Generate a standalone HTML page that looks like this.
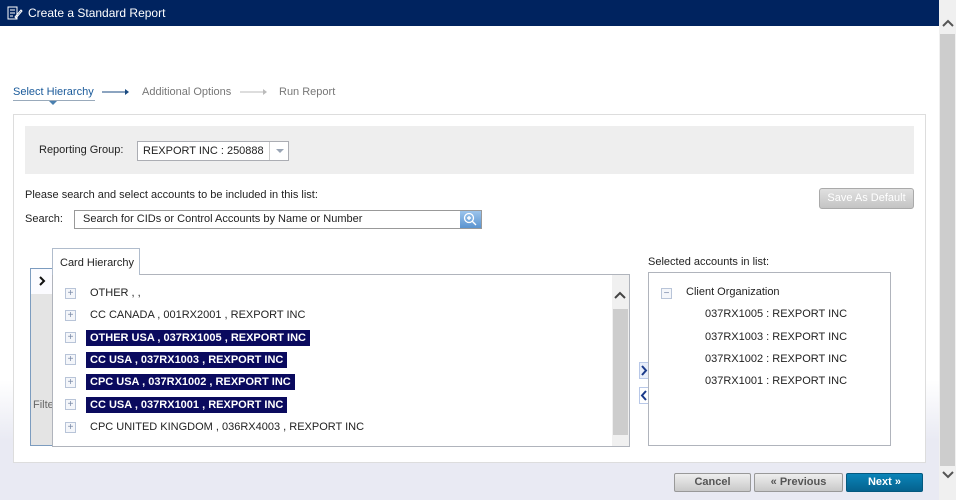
<!DOCTYPE html>
<html><head><style>
*{margin:0;padding:0;box-sizing:border-box}
body{width:956px;height:500px;overflow:hidden;position:relative;font-family:"Liberation Sans",Arial,sans-serif;font-size:11px;color:#222;background:linear-gradient(#fff 0,#fff 380px,#e9eaf3 440px,#e9eaf3 500px)}
.a{position:absolute;white-space:nowrap}
.hdr{left:0;top:0;width:939px;height:26px;background:#00235f;color:#fff;font-size:12px;line-height:26px;padding-left:28px}
.plus{position:absolute;left:65px;width:11px;height:11px;border:1px solid #b8c4d8;background:#f4f6fa;color:#7a8aa8;font-size:10px;line-height:9px;text-align:center}
.row{position:absolute;left:86px;height:16px;line-height:16px;font-size:11px;padding:0 4px;white-space:nowrap}
.sel{background:#0a0a5e;color:#fff;font-weight:bold}
.btn{position:absolute;top:473px;height:19px;border:1px solid #999;border-radius:2px;background:linear-gradient(#eee,#c9c9c9);font-weight:bold;color:#555;font-size:11px;line-height:17px;text-align:center}
</style></head><body>
<div class="a hdr">Create a Standard Report</div>
<svg class="a" style="left:7px;top:6px" width="16" height="14" viewBox="0 0 16 14"><rect x="1" y="1" width="9" height="12" fill="none" stroke="#fff"/><path d="M3 4h5M3 7h5M3 10h3M8 11l6-7 1 1-6 7z" stroke="#fff" fill="none"/></svg>
<!-- scrollbar -->
<div class="a" style="left:939px;top:0;width:17px;height:500px;background:#f0f0f0"></div>
<div class="a" style="left:940px;top:34px;width:15px;height:432px;background:#cdcdcd"></div>
<svg class="a" style="left:941px;top:470px" width="14" height="10"><path d="M2 2l5 5 5-5" stroke="#555" stroke-width="2" fill="none"/></svg>
<svg class="a" style="left:941px;top:18px" width="14" height="10"><path d="M2 8l5-5 5 5" stroke="#555" stroke-width="2" fill="none"/></svg>
<!-- steps -->
<div class="a" style="left:13px;top:86px;color:#1a5a9a">Select Hierarchy</div>
<div class="a" style="left:13px;top:100px;width:82px;height:1px;background:#9ab"></div>
<div class="a" style="left:49px;top:101px;width:0;height:0;border:4px solid transparent;border-top-color:#4a80b0"></div>
<svg class="a" style="left:102px;top:88px" width="28" height="8"><path d="M0 4h24" stroke="#1a4a80"/><path d="M23 1l4 3-4 3z" fill="#1a4a80"/></svg>
<div class="a" style="left:142px;top:86px;color:#777">Additional Options</div>
<svg class="a" style="left:240px;top:88px" width="28" height="8"><path d="M0 4h24" stroke="#bbb"/><path d="M23 1l4 3-4 3z" fill="#bbb"/></svg>
<div class="a" style="left:279px;top:86px;color:#777">Run Report</div>
<!-- main panel -->
<div class="a" style="left:13px;top:114px;width:913px;height:349px;background:#fff;border:1px solid #ddd"></div>
<div class="a" style="left:25px;top:126px;width:889px;height:48px;background:#eeeeee"></div>
<div class="a" style="left:39px;top:144px">Reporting Group:</div>
<div class="a" style="left:137px;top:141px;width:152px;height:20px;border:1px solid #abadb3;background:#fff;line-height:18px;padding-left:5px">REXPORT INC : 250888</div>
<div class="a" style="left:269px;top:142px;width:1px;height:18px;background:#ccc"></div>
<div class="a" style="left:276px;top:149px;border:4px solid transparent;border-top-color:#9aa5b5"></div>
<div class="a" style="left:25px;top:189px">Please search and select accounts to be included in this list:</div>
<div class="a" style="left:25px;top:213px">Search:</div>
<div class="a" style="left:74px;top:210px;width:408px;height:19px;border:1px solid #999;background:#fff;line-height:17px;padding-left:8px">Search for CIDs or Control Accounts by Name or Number</div>
<div class="a" style="left:460px;top:211px;width:21px;height:17px;background:linear-gradient(#9cc4ec,#5a94d0)"></div>
<svg class="a" style="left:462px;top:212px" width="16" height="15"><circle cx="7" cy="6" r="4.5" stroke="#fff" fill="none" stroke-width="1.3"/><path d="M5 6h4M7 4v4M10 9l4 4" stroke="#fff" stroke-width="1.4"/></svg>
<div class="a" style="left:819px;top:188px;width:95px;height:21px;border:1px solid #aaa;border-radius:3px;background:linear-gradient(#e0e0e0,#c4c4c4);color:#fff;line-height:19px;text-align:center">Save As Default</div>
<!-- left collapsed -->
<div class="a" style="left:30px;top:268px;width:23px;height:178px;border:1px solid #7c9cbf;background:#e4e4e4"></div>
<div class="a" style="left:31px;top:269px;width:21px;height:25px;background:#fbfbff"></div>
<svg class="a" style="left:37px;top:276px" width="10" height="10"><path d="M3 1l4 4-4 4" stroke="#111" stroke-width="2" fill="none"/></svg>
<div class="a" style="left:33px;top:399px;color:#666;width:19px;overflow:hidden;font-size:11px">Filter</div>
<!-- tab -->
<div class="a" style="left:52px;top:248px;width:88px;height:27px;border:1px solid #b0bccc;border-bottom:none;background:#fff;z-index:2;padding:8px 0 0 7px">Card Hierarchy</div>
<div class="a" style="left:52px;top:274px;width:578px;height:173px;border:1px solid #b0b4bc;background:#fff"></div>
<div class="a" style="left:612px;top:275px;width:17px;height:171px;background:#f0f0f0"></div>
<div class="a" style="left:613px;top:309px;width:15px;height:126px;background:#cdcdcd"></div>
<svg class="a" style="left:613px;top:290px" width="14" height="10"><path d="M2 8l5-5 5 5" stroke="#444" stroke-width="2" fill="none"/></svg>
<div class="plus" style="top:288px">+</div><div class="row" style="top:285px">OTHER , ,</div>
<div class="plus" style="top:310px">+</div><div class="row" style="top:307px">CC CANADA , 001RX2001 , REXPORT INC</div>
<div class="plus" style="top:332px">+</div><div class="row sel" style="top:330px">OTHER USA , 037RX1005 , REXPORT INC</div>
<div class="plus" style="top:354px">+</div><div class="row sel" style="top:352px">CC USA , 037RX1003 , REXPORT INC</div>
<div class="plus" style="top:377px">+</div><div class="row sel" style="top:374px">CPC USA , 037RX1002 , REXPORT INC</div>
<div class="plus" style="top:399px">+</div><div class="row sel" style="top:397px">CC USA , 037RX1001 , REXPORT INC</div>
<div class="plus" style="top:422px">+</div><div class="row" style="top:419px">CPC UNITED KINGDOM , 036RX4003 , REXPORT INC</div>
<!-- move buttons -->
<div class="a" style="left:639px;top:362px;width:10px;height:17px;border:1px solid #b8c8e8;background:#e8eefa"></div>
<svg class="a" style="left:640px;top:365px" width="9" height="11"><path d="M2 1l4 4.5-4 4.5" stroke="#1a3a8a" stroke-width="2" fill="none"/></svg>
<div class="a" style="left:639px;top:387px;width:10px;height:17px;border:1px solid #b8c8e8;background:#fff"></div>
<svg class="a" style="left:640px;top:390px" width="9" height="11"><path d="M6 1l-4 4.5 4 4.5" stroke="#1a3a8a" stroke-width="2" fill="none"/></svg>
<!-- right list -->
<div class="a" style="left:648px;top:256px;font-size:11px">Selected accounts in list:</div>
<div class="a" style="left:648px;top:272px;width:243px;height:174px;border:1px solid #b0b4bc;background:#fff"></div>
<div class="plus" style="left:661px;top:288px">−</div>
<div class="a" style="left:686px;top:286px;font-size:11px">Client Organization</div>
<div class="a" style="left:705px;top:308px;font-size:11px">037RX1005 : REXPORT INC</div>
<div class="a" style="left:705px;top:331px;font-size:11px">037RX1003 : REXPORT INC</div>
<div class="a" style="left:705px;top:353px;font-size:11px">037RX1002 : REXPORT INC</div>
<div class="a" style="left:705px;top:375px;font-size:11px">037RX1001 : REXPORT INC</div>
<!-- bottom buttons -->
<div class="btn" style="left:674px;width:77px">Cancel</div>
<div class="btn" style="left:754px;width:89px">« Previous</div>
<div class="btn" style="left:846px;width:77px;background:linear-gradient(#0a84b8,#05628e);border-color:#04597f;color:#fff">Next »</div>
</body></html>
